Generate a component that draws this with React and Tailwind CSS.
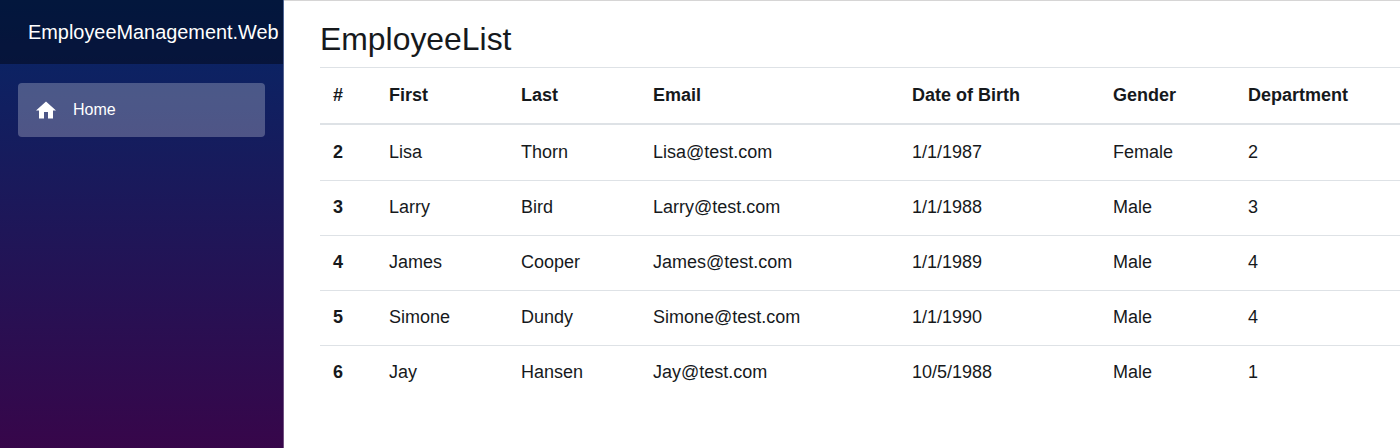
const employees = [
    { id: 2, first: 'Lisa', last: 'Thorn', email: 'Lisa@test.com', dob: '1/1/1987', gender: 'Female', department: 2 },
    { id: 3, first: 'Larry', last: 'Bird', email: 'Larry@test.com', dob: '1/1/1988', gender: 'Male', department: 3 },
    { id: 4, first: 'James', last: 'Cooper', email: 'James@test.com', dob: '1/1/1989', gender: 'Male', department: 4 },
    { id: 5, first: 'Simone', last: 'Dundy', email: 'Simone@test.com', dob: '1/1/1990', gender: 'Male', department: 4 },
    { id: 6, first: 'Jay', last: 'Hansen', email: 'Jay@test.com', dob: '10/5/1988', gender: 'Male', department: 1 },
];

const headers = ['#', 'First', 'Last', 'Email', 'Date of Birth', 'Gender', 'Department'];

const HomeIcon = () => (
    <svg width="20" height="18" viewBox="0 0 20 18" fill="currentColor">
        <path d="M10 0.5 L20 9.5 L17 9.5 L17 17.5 L12 17.5 L12 11 L8 11 L8 17.5 L3 17.5 L3 9.5 L0 9.5 Z" />
    </svg>
);

const App = () => {
    return (
        <div className="flex h-[448px] w-[1400px] overflow-hidden bg-white font-['Liberation_Sans',Arial,sans-serif] text-[#16191c]">
            <aside className="flex w-[284px] shrink-0 flex-col bg-[linear-gradient(180deg,#052767_0%,#37064a_100%)] border-r border-white/30">
                <div className="flex h-16 items-center bg-black/40 pl-7 pt-px text-[19.9px] text-white">
                    EmployeeManagement.Web
                </div>
                <nav className="px-[18px] pt-[19px]">
                    <a className="flex h-[54px] w-[247px] items-center gap-[17px] rounded bg-white/25 pl-[18px] text-[16px] text-white">
                        <HomeIcon />
                        Home
                    </a>
                </nav>
            </aside>

            <main className="flex-1 border-t border-[#d6d5d5] pl-9">
                <h1 className="h-[66px] pt-[17px] text-[31.9px] leading-[42px]">EmployeeList</h1>
                <table className="w-[1080px] table-fixed border-collapse text-left text-[18px]">
                    <colgroup>
                        <col className="w-[56px]" />
                        <col className="w-[132px]" />
                        <col className="w-[132px]" />
                        <col className="w-[259px]" />
                        <col className="w-[201px]" />
                        <col className="w-[135px]" />
                        <col />
                    </colgroup>
                    <thead>
                        <tr className="h-[56px] border-t border-b-2 border-t-[#dee2e6] border-b-[#dee2e6]">
                            {headers.map((h) => (
                                <th key={h} className="pl-[13px] pr-0 font-bold">{h}</th>
                            ))}
                        </tr>
                    </thead>
                    <tbody>
                        {employees.map((e) => (
                            <tr key={e.id} className="h-[55px] first:h-[56.5px] border-b border-[#dee2e6] last:border-b-0">
                                <th className="pl-[13px] font-bold">{e.id}</th>
                                <td className="pl-[13px]">{e.first}</td>
                                <td className="pl-[13px]">{e.last}</td>
                                <td className="pl-[13px]">{e.email}</td>
                                <td className="pl-[13px]">{e.dob}</td>
                                <td className="pl-[13px]">{e.gender}</td>
                                <td className="pl-[13px]">{e.department}</td>
                            </tr>
                        ))}
                    </tbody>
                </table>
            </main>
        </div>
    );
};

export default App;
